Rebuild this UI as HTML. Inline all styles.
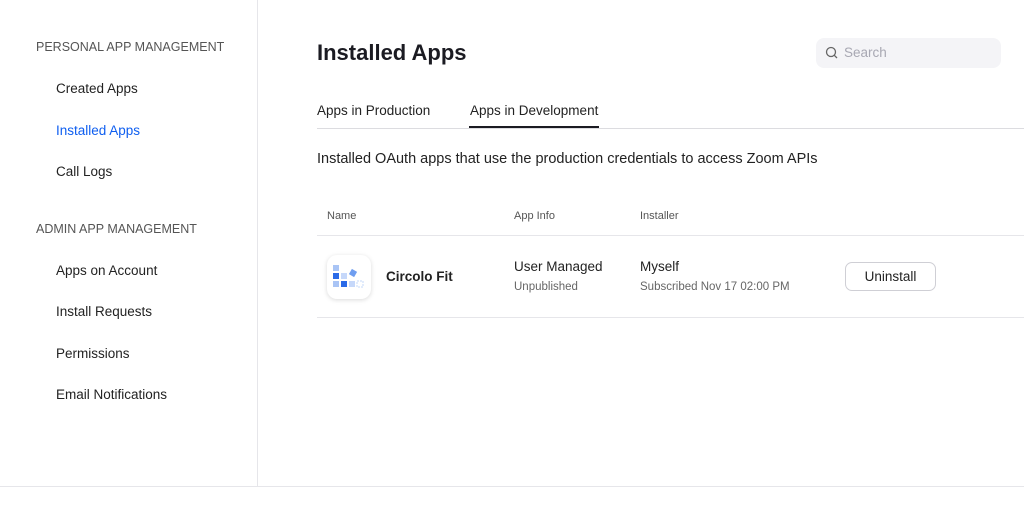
<!DOCTYPE html>
<html><head><style>
body{margin:0;width:1024px;height:508px;background:#fff;font-family:"Liberation Sans",sans-serif;color:#222;position:relative;overflow:hidden}
.a{position:absolute;white-space:nowrap}
.side{position:absolute;left:0;top:0;width:257px;height:486px;border-right:1px solid #e6e6ea}
.h{font-size:12.5px;color:#555;left:36px}
.i{font-size:13.5px;color:#222;left:56px}
</style></head><body>
<div class="side"></div>
<div class="a" style="left:0;top:486px;width:1024px;border-top:1px solid #e6e6ea"></div>
<div class="a h" style="top:40px">PERSONAL APP MANAGEMENT</div>
<div class="a i" style="top:81px">Created Apps</div>
<div class="a i" style="top:123px;color:#0e5ef0">Installed Apps</div>
<div class="a i" style="top:164px">Call Logs</div>
<div class="a h" style="top:222px">ADMIN APP MANAGEMENT</div>
<div class="a i" style="top:263px">Apps on Account</div>
<div class="a i" style="top:304px">Install Requests</div>
<div class="a i" style="top:346px">Permissions</div>
<div class="a i" style="top:387px">Email Notifications</div>

<div class="a" style="left:317px;top:40px;font-size:22px;font-weight:bold;color:#1b1b22">Installed Apps</div>
<div class="a" style="left:816px;top:38px;width:185px;height:30px;background:#f4f4f7;border-radius:8px"></div>
<svg class="a" style="left:825px;top:46px" width="14" height="14"><circle cx="6" cy="6" r="4.5" fill="none" stroke="#666" stroke-width="1.3"/><line x1="9.3" y1="9.3" x2="12" y2="12" stroke="#666" stroke-width="1.3"/></svg>
<div class="a" style="left:844px;top:45px;font-size:13.5px;color:#a8a8b3">Search</div>

<div class="a" style="left:317px;top:103px;font-size:13.5px">Apps in Production</div>
<div class="a" style="left:470px;top:103px;font-size:13.5px">Apps in Development</div>
<div class="a" style="left:317px;top:128px;width:712px;border-top:1px solid #dcdce0"></div>
<div class="a" style="left:469px;top:126px;width:130px;height:2px;background:#1b1b22"></div>
<div class="a" style="left:317px;top:151px;font-size:14.5px">Installed OAuth apps that use the production credentials to access Zoom APIs</div>

<div class="a" style="left:327px;top:210px;font-size:11px;color:#555">Name</div>
<div class="a" style="left:514px;top:210px;font-size:11px;color:#555">App Info</div>
<div class="a" style="left:640px;top:210px;font-size:11px;color:#555">Installer</div>
<div class="a" style="left:317px;top:235px;width:712px;border-top:1px solid #e6e6ea"></div>

<div class="a" style="left:327px;top:255px;width:44px;height:44px;border-radius:10px;background:#fff;box-shadow:0 1px 5px rgba(0,0,0,.15)">
<svg width="44" height="44"><g><rect x="6" y="10" width="6" height="6" fill="#a9c4f5"/><rect x="6" y="18" width="6" height="6" fill="#2a6ae8"/><rect x="14" y="18" width="6" height="6" fill="#c6d8fa"/><rect x="6" y="26" width="6" height="6" fill="#a9c4f5"/><rect x="14" y="26" width="6" height="6" fill="#2a6ae8"/><rect x="22" y="26" width="6" height="6" fill="#c6d8fa"/><rect x="30" y="26" width="6" height="6" fill="none" stroke="#c6d8fa" stroke-dasharray="2 1"/><rect x="23" y="15" width="6" height="6" fill="#6f9ef0" transform="rotate(30 26 18)"/></g></svg></div>
<div class="a" style="left:386px;top:269px;font-size:13.5px;font-weight:bold">Circolo Fit</div>
<div class="a" style="left:514px;top:259px;font-size:13.5px">User Managed</div>
<div class="a" style="left:514px;top:281px;font-size:11.5px;color:#666">Unpublished</div>
<div class="a" style="left:640px;top:259px;font-size:13.5px">Myself</div>
<div class="a" style="left:640px;top:281px;font-size:11.5px;color:#666">Subscribed Nov 17 02:00 PM</div>
<div class="a" style="left:845px;top:262px;width:89px;height:27px;border:1px solid #cfcfd5;border-radius:7px;text-align:center;line-height:27px;font-size:13.5px">Uninstall</div>
<div class="a" style="left:317px;top:317px;width:712px;border-top:1px solid #e6e6ea"></div>
</body></html>
